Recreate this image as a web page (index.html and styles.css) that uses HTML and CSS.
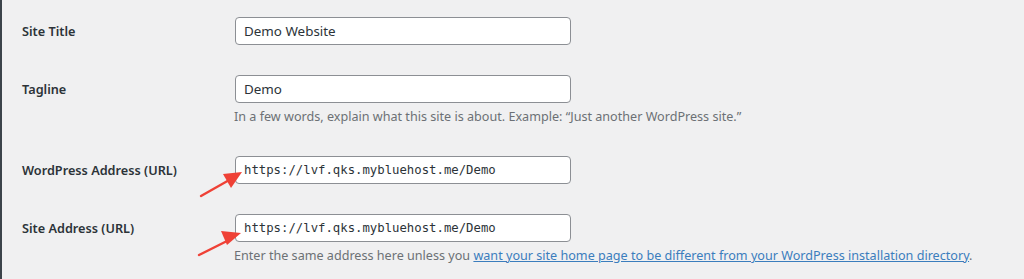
FILE: index.html
```html
<!DOCTYPE html>
<html lang="en">
<head>
<meta charset="utf-8">
<link rel="stylesheet" href="styles.css">
</head>
<body>
<div class="page">
  <form class="settings">
    <div class="row">
      <label class="label" for="t">Site Title</label>
      <div class="field"><input id="t" class="text" value="Demo Website"></div>
    </div>
    <div class="row">
      <label class="label" for="g">Tagline</label>
      <div class="field">
        <input id="g" class="text" value="Demo">
        <p class="desc">In a few words, explain what this site is about. Example: “Just another WordPress site.”</p>
      </div>
    </div>
    <div class="row">
      <label class="label" for="w">WordPress Address (URL)</label>
      <div class="field"><input id="w" class="text mono" value="https://lvf.qks.mybluehost.me/Demo"></div>
    </div>
    <div class="row">
      <label class="label" for="s">Site Address (URL)</label>
      <div class="field">
        <input id="s" class="text mono" value="https://lvf.qks.mybluehost.me/Demo">
        <p class="desc">Enter the same address here unless you <a href="#">want your site home page to be different from your WordPress installation directory</a>.</p>
      </div>
    </div>
  </form>
  <svg class="arrow arrow-1" width="50" height="32" viewBox="0 0 50 32">
    <line x1="2" y1="28" x2="32" y2="11" stroke="#ef4136" stroke-width="2.4" stroke-linecap="round"/>
    <polygon points="43,4 24,6 32,20" fill="#ef4136"/>
  </svg>
  <svg class="arrow arrow-2" width="50" height="32" viewBox="0 0 50 32">
    <line x1="2" y1="28" x2="32" y2="13" stroke="#ef4136" stroke-width="2.4" stroke-linecap="round"/>
    <polygon points="44,6 24,4 30,18" fill="#ef4136"/>
  </svg>
</div>
</body>
</html>
```
FILE: styles.css
```css
html, body {
  margin: 0;
  padding: 0;
  background: #f0f0f1;
}
body {
  font-family: "Noto Sans", "Open Sans", sans-serif;
  color: #1d2327;
  height: 279px;
  overflow: hidden;
}
.page {
  position: relative;
  border-left: 2px solid #3c434a;
  height: 279px;
  box-sizing: border-box;
  padding-left: 20px;
  overflow: hidden;
}
.settings {
  display: flex;
  flex-direction: column;
  gap: 30px;
  padding-top: 17px;
  margin: 0;
}
.row {
  display: flex;
  align-items: flex-start;
}
.label {
  width: 213px;
  flex: none;
  font-size: 12.7px;
  font-weight: 600;
  line-height: 28px;
  color: #2c3338;
}
.field {
  display: flex;
  flex-direction: column;
}
.text {
  box-sizing: border-box;
  width: 336px;
  height: 28px;
  margin: 0;
  padding: 0 8px;
  border: 1px solid #8c8f94;
  border-radius: 4px;
  background: #fff;
  font-family: "Noto Sans", "Open Sans", sans-serif;
  font-size: 13.4px;
  color: #2c3338;
  outline: none;
}
.mono {
  font-family: "DejaVu Sans Mono", "Liberation Mono", monospace;
  font-size: 12.3px;
  color: #2c3338;
}
.desc {
  margin: 5px 0 0 -1px;
  font-size: 12.6px;
  line-height: 18px;
  color: #6c7075;
  white-space: nowrap;
}
.desc a {
  color: #3b7dbd;
  text-decoration: underline;
}
.arrow {
  position: absolute;
}
.arrow-1 {
  left: 197px;
  top: 168px;
}
.arrow-2 {
  left: 195px;
  top: 227px;
}
```
